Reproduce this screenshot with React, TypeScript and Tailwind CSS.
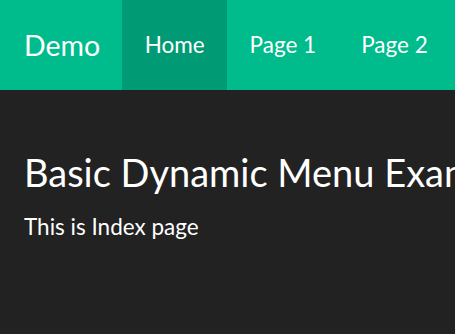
export default function App() {
  const links = ['Home', 'Page 1', 'Page 2'];
  return (
    <div className="min-h-screen bg-[#222222] text-white font-['Lato','Liberation_Sans',sans-serif]">
      <nav className="flex h-[90px] bg-[#00bc8c] pl-[24px]">
        <a className="flex items-center pr-[22px] text-[28.5px]">Demo</a>
        <ul className="flex">
          {links.map((l, i) => (
            <li key={l}>
              <a
                className={`flex h-full items-center px-[22.5px] text-[22.5px] ${
                  i === 0 ? 'bg-[#009b74]' : ''
                }`}
              >
                {l}
              </a>
            </li>
          ))}
        </ul>
      </nav>
      <main className="px-[24px] pt-[62px]">
        <h1 className="whitespace-nowrap text-[38px] leading-[1.1]">Basic Dynamic Menu Example</h1>
        <p className="mt-[16px] text-[22.5px]">This is Index page</p>
      </main>
    </div>
  );
}
